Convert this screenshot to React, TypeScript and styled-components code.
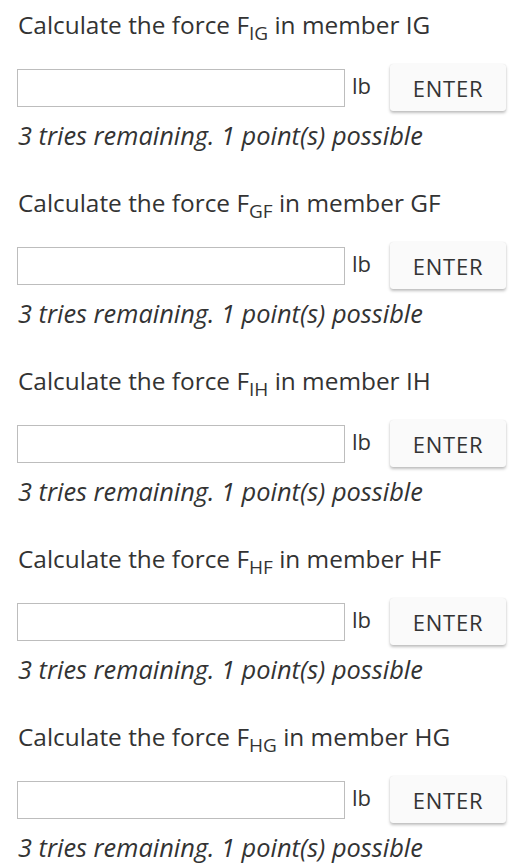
import React from 'react';
import styled, { createGlobalStyle } from 'styled-components';

const GlobalStyle = createGlobalStyle`
  html, body {
    margin: 0;
    padding: 0;
    background: #fff;
  }
  body {
    font-family: "Open Sans", "Liberation Sans", sans-serif;
    color: #333;
  }
`;

const Page = styled.div`
  display: flex;
  flex-direction: column;
  padding: 8px 0 0 18px;
`;

const Question = styled.section`
  display: flex;
  flex-direction: column;
  height: 178px;
`;

const Title = styled.div`
  font-size: 24.4px;
  line-height: 34px;
  color: #333;
  margin: 0;
`;

const Sub = styled.span`
  font-size: 19px;
  position: relative;
  top: 6px;
  line-height: 0;
`;

const AnswerRow = styled.div`
  display: flex;
  align-items: flex-start;
  margin-top: 22px;
`;

const Field = styled.input`
  box-sizing: border-box;
  width: 328px;
  height: 38px;
  margin: 5px 0 0 -1px;
  border: 1px solid #bdbdbd;
  border-radius: 0;
  padding: 0 8px;
  font-family: inherit;
  font-size: 18px;
  outline: none;
`;

const Unit = styled.span`
  font-size: 22px;
  line-height: 30px;
  margin: 6px 0 0 7px;
  width: 38px;
  color: #333;
`;

const EnterButton = styled.button`
  box-sizing: border-box;
  width: 116px;
  height: 47px;
  border: none;
  border-radius: 3px;
  background: #fafafa;
  box-shadow: 0 2px 3px rgba(0, 0, 0, 0.25), 0 0 1px rgba(0, 0, 0, 0.12);
  font-family: "Open Sans", "Liberation Sans", sans-serif;
  font-size: 22px;
  color: #333;
  letter-spacing: 0.8px;
  cursor: pointer;
`;

const Tries = styled.div`
  font-size: 25.4px;
  font-style: italic;
  line-height: 30px;
  margin-top: 9px;
  color: #333;
`;

const questions = [
  { sub: 'IG', member: 'IG' },
  { sub: 'GF', member: 'GF' },
  { sub: 'IH', member: 'IH' },
  { sub: 'HF', member: 'HF' },
  { sub: 'HG', member: 'HG' },
];

export default function App() {
  return (
    <>
      <GlobalStyle />
      <Page>
        {questions.map((q) => (
          <Question key={q.sub}>
            <Title>
              Calculate the force F<Sub>{q.sub}</Sub> in member {q.member}
            </Title>
            <AnswerRow>
              <Field type="text" />
              <Unit>lb</Unit>
              <EnterButton>ENTER</EnterButton>
            </AnswerRow>
            <Tries>3 tries remaining. 1 point(s) possible</Tries>
          </Question>
        ))}
      </Page>
    </>
  );
}
